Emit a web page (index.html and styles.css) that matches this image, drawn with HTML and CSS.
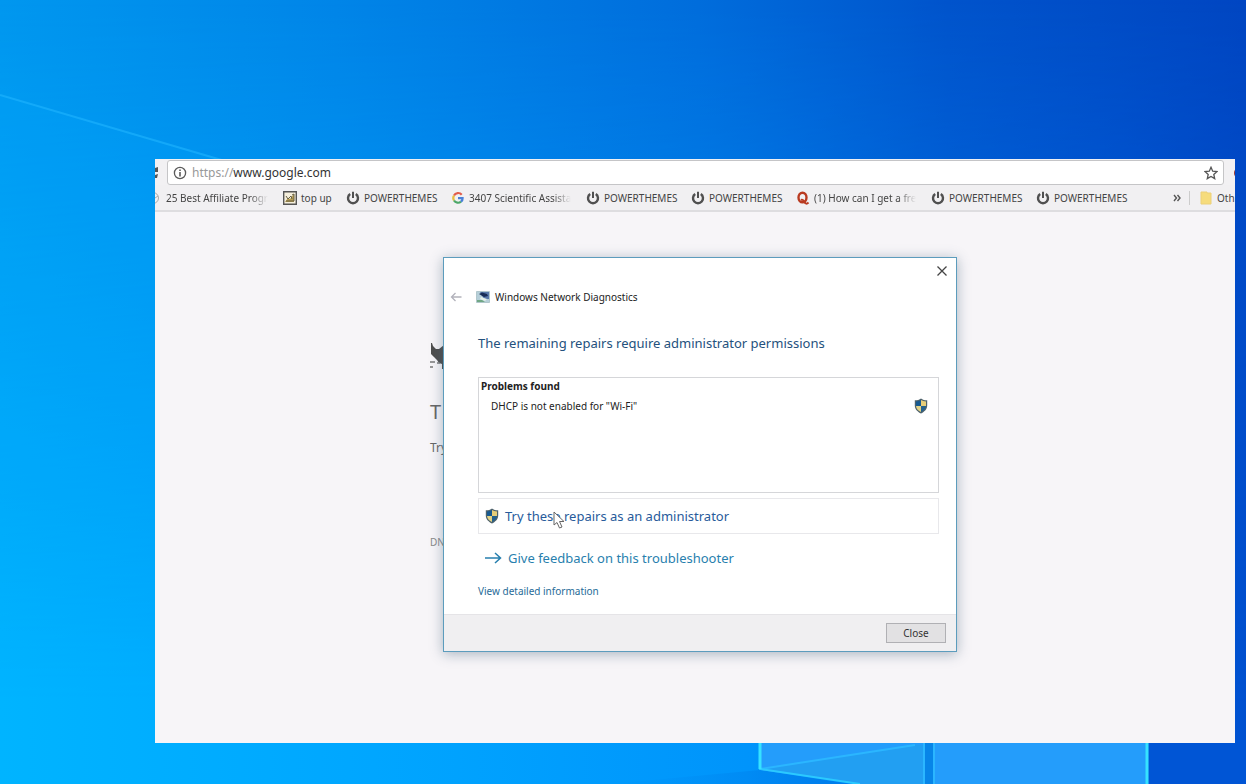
FILE: index.html
```html
<!DOCTYPE html>
<html lang="en">
<head>
<meta charset="utf-8">
<title>Windows Network Diagnostics</title>
<link rel="stylesheet" href="styles.css">
</head>
<body>
<svg class="defs" aria-hidden="true">
  <defs>
    <symbol id="power" viewBox="0 0 14 14"><path d="M4.200 3.100A5 5 0 1 0 9.800 3.100" fill="none" stroke="#505050" stroke-width="2.400"/><path d="M7 .8V7" stroke="#505050" stroke-width="2"/></symbol>
    <symbol id="shield" viewBox="0 0 14 16">
      <path d="M7 .5C5.500 1.800 3.200 2.300.8 2.300V7.500C.8 11.500 4 14 7 15.500 10 14 13.200 11.500 13.200 7.500V2.300C10.800 2.300 8.500 1.800 7 .5Z" fill="#4e626b"/>
      <path d="M7 2V8H2V3.500C4 3.400 5.800 2.800 7 2Z" fill="#175990"/><path d="M7 2V8H12V3.500C10 3.400 8.200 2.800 7 2Z" fill="#e6cd78"/>
      <path d="M2 8H7V14C4.500 12.800 2.200 11 2 8Z" fill="#e2d286"/><path d="M12 8H7V14C9.500 12.800 11.800 11 12 8Z" fill="#23618e"/>
    </symbol>
  </defs>
</svg>
<main class="desktop">
  <svg class="wallpaper" viewBox="0 0 1246 784" preserveAspectRatio="none" aria-hidden="true">
    <defs>
      <linearGradient id="sky" x1="0" y1="0" x2="1" y2="0"><stop offset="0" stop-color="#0097ef"/><stop offset=".27" stop-color="#0085e8"/><stop offset=".56" stop-color="#006ddc"/><stop offset=".76" stop-color="#0054cc"/><stop offset="1" stop-color="#0046c2"/></linearGradient>
      <linearGradient id="floor" x1="0" y1="0" x2="1" y2="0"><stop offset="0" stop-color="#00b4ff"/><stop offset=".3" stop-color="#00a6ff"/><stop offset=".6" stop-color="#0094fb"/><stop offset=".9" stop-color="#0066e4"/><stop offset="1" stop-color="#0050cf"/></linearGradient>
      <linearGradient id="fade" x1="0" y1="0" x2="0" y2="1"><stop offset="0" stop-color="#000"/><stop offset=".9" stop-color="#fff"/></linearGradient>
      <mask id="down"><path d="M0 0H1246V784H0Z" fill="url(#fade)"/></mask>
      <linearGradient id="below" x1="0" y1="0" x2="1" y2="0"><stop offset="0" stop-color="#0090f5" stop-opacity="0"/><stop offset="1" stop-color="#007bea"/></linearGradient>
    </defs>
    <path d="M0 0H1246V784H0Z" fill="url(#sky)"/>
    <path d="M0 0H1246V784H0Z" fill="url(#floor)" mask="url(#down)"/>
    <path d="M0 95L225 161L600 270V500H0Z" fill="#00a8ff" opacity=".15"/>
    <path d="M0 95L225 161" stroke="#20b5ff" stroke-width="2" opacity=".6"/>
    <path d="M610 784L760 770L850 784Z" fill="url(#below)"/>
    <path d="M1149 740H1246V784H1149Z" fill="#0055d5"/>
    <path d="M760 740H1147V784H860L760 770Z" fill="#249dfb"/>
    <path d="M760 769L915 745H924V784H860Z" fill="#229ff2"/>
    <path d="M925 740H933V784H925Z" fill="#0785e8"/>
    <path d="M760 769L915 745M924 743V784M934 743V784" stroke="#2bb6ff" stroke-width="2" fill="none"/>
    <path d="M760 740V769L860 784" stroke="#2bc9ff" stroke-width="2" fill="none"/>
    <path d="M760 740V769M1147 740V784" stroke="#36e2ff" stroke-width="3"/>
  </svg>

  <section class="browser">
    <div class="toolbar">
      <svg class="reload" viewBox="0 0 6 14" aria-hidden="true"><path d="M0 2L3 1V6H0ZM0 9L3 8 2 12H0Z" fill="#555"/></svg>
      <div class="address">
        <svg class="info" viewBox="0 0 14 14" aria-hidden="true"><circle cx="7" cy="7" r="5.600" fill="none" stroke="#5a5a5a" stroke-width="1.300"/><path d="M7 6V10.500M7 3.500V5" stroke="#5a5a5a" stroke-width="1.600"/></svg>
        <div class="url"><span>https://</span>www.google.com</div>
        <button class="star" aria-label="Bookmark this page"><svg viewBox="0 0 14 14"><path d="M7 1.300L8.700 5.200 13 5.600 9.800 8.400 10.700 12.600 7 10.400 3.300 12.600 4.200 8.400 1 5.600 5.300 5.200Z" fill="none" stroke="#555" stroke-width="1.300"/></svg></button>
      </div>
      <svg class="extension" viewBox="0 0 14 14" aria-hidden="true"><circle cx="7" cy="7" r="6" fill="#9b3931"/></svg>
    </div>
    <nav class="bookmarks">
      <a class="mark first long" href="#"><svg viewBox="0 0 14 14"><path d="M5 1.500A5.500 5.500 0 1 1 5 12.500M7 7L10 5" fill="none" stroke="#aaa"/></svg><span>25 Best Affiliate Progr</span></a>
      <a class="mark short" href="#"><svg viewBox="0 0 14 14"><path d="M.7.7H13.300V13.300H.7Z" fill="#f5efdc" stroke="#555" stroke-width="1.400"/><path d="M2 11L5 7 7 8 11 3V11Z" fill="#b79e52"/><path d="M3 5L5 8 8 5 9 8M3 10H11M9 4L11 3V10" stroke="#645d42" fill="none"/></svg><span>top up</span></a>
      <a class="mark" href="#"><svg><use href="#power"/></svg><span>POWERTHEMES</span></a>
      <a class="mark long" href="#"><svg viewBox="0 0 14 14"><g fill="none" stroke-width="2.200"><path d="M10.700 3.700A4.600 4.600 0 0 0 3 4.600" stroke="#e15c4b"/><path d="M3 4.600A4.600 4.600 0 0 0 3 9.500" stroke="#e6bd42"/><path d="M3 9.500A4.600 4.600 0 0 0 10 10.600" stroke="#4ca768"/><path d="M10 10.600Q11.700 9.200 11.600 7.200H7" stroke="#4a80d8"/></g></svg><span>3407 Scientific Assista</span></a>
      <a class="mark" href="#"><svg><use href="#power"/></svg><span>POWERTHEMES</span></a>
      <a class="mark" href="#"><svg><use href="#power"/></svg><span>POWERTHEMES</span></a>
      <a class="mark long" href="#"><svg viewBox="0 0 14 14"><ellipse cx="6.500" cy="6.500" rx="4" ry="4.800" fill="none" stroke="#b93a20" stroke-width="2.400"/><path d="M5 9Q7 8 8.500 11T12.500 11.500" fill="none" stroke="#b93a20" stroke-width="2"/></svg><span>(1) How can I get a fre</span></a>
      <a class="mark" href="#"><svg><use href="#power"/></svg><span>POWERTHEMES</span></a>
      <a class="mark" href="#"><svg><use href="#power"/></svg><span>POWERTHEMES</span></a>
      <button class="more" aria-label="More bookmarks"><svg viewBox="0 0 8 8"><path d="M1 1L3.500 4 1 7M4.500 1L7 4 4.500 7" fill="none" stroke="#555" stroke-width="1.400"/></svg></button>
      <a class="mark other" href="#"><svg viewBox="0 0 14 14"><path d="M1 1H7V2H11V13H1Z" fill="#f6dc7c" stroke="#ecd078"/></svg><span>Oth</span></a>
    </nav>
    <div class="page">
      <svg class="dino" viewBox="0 0 20 30" aria-hidden="true"><path d="M1 2H2L3 5 6 8H9L14 4H20V28H12V23L9 22 7 19 4 16 1 13Z" fill="#4d4d4d"/><path d="M0 21H5M7 22H10M0 26H3" stroke="#777" stroke-width="1.300"/></svg>
      <h1>T</h1>
      <p class="hint">Try</p>
      <p class="code">DN</p>
    </div>

    <section class="dialog" role="dialog" aria-labelledby="dialog-title">
      <button class="dismiss" aria-label="Close window"><svg viewBox="0 0 12 12"><path d="M1.500 1.500L10.500 10.500M10.500 1.500L1.500 10.500" stroke="#444" stroke-width="1.300"/></svg></button>
      <header>
        <button class="back" aria-label="Back"><svg viewBox="0 0 12 12"><path d="M11.500 6H1.500M5.500 2L1.500 6 5.500 10" fill="none" stroke="#b2b2bb" stroke-width="1.300"/></svg></button>
        <svg class="app" viewBox="0 0 14 12" aria-hidden="true"><path d="M.5.5H13.500V11.500H.5Z" fill="#b6cfd9" stroke="#b1c7cc"/><path d="M4 1H13V8H8Z" fill="#5879aa"/><path d="M3 3L6 1.500 11 3 12 5 8 6Z" fill="#182d57"/><path d="M5 6L11 8 9 10 4 8Z" fill="#e6f2e8"/><path d="M1 9H6L9 11H1Z" fill="#70a784"/></svg>
        <span id="dialog-title">Windows Network Diagnostics</span>
      </header>
      <div class="content">
        <h2>The remaining repairs require administrator permissions</h2>
        <div class="problems">
          <h3>Problems found</h3>
          <div class="problem"><span>DHCP is not enabled for "Wi-Fi"</span><svg class="shield"><use href="#shield"/></svg></div>
        </div>
        <button class="command repair"><svg class="shield"><use href="#shield"/></svg><span>Try these repairs as an administrator</span></button>
        <button class="command feedback"><svg class="arrow" viewBox="0 0 17 14"><path d="M0 7H15M10 2L15.500 7 10 12" fill="none" stroke="#277fae" stroke-width="1.500"/></svg><span>Give feedback on this troubleshooter</span></button>
        <a class="details" href="#">View detailed information</a>
      </div>
      <footer><button class="close">Close</button></footer>
      <svg class="cursor" viewBox="0 0 12 18" aria-hidden="true"><path d="M1 1V14L4 11.500 6.500 17 9 16 6.500 10.500H11Z" fill="#fff" stroke="#666"/></svg>
    </section>
  </section>
</main>
</body>
</html>
```
FILE: styles.css
```css
* { box-sizing: border-box; }
body { margin: 0; font-family: "Noto Sans", "Open Sans", sans-serif; font-size: 10px; color: #333; }
button { font: inherit; color: inherit; background: none; border: 0; padding: 0; }
a { color: inherit; text-decoration: none; }
h1, h2, h3, p { margin: 0; font-weight: 400; }
svg { display: block; flex: none; }
.defs { position: absolute; width: 0; height: 0; }
.desktop { position: relative; display: flex; min-height: 100vh; padding: 159px 11px 41px 155px; overflow: hidden; background: #0094f5; }
.wallpaper { position: absolute; inset: 0; width: 100%; height: 100%; }
.browser { position: relative; flex: 1; min-width: 0; display: flex; flex-direction: column; overflow: hidden; background: #f7f5f8; }

.toolbar { display: flex; align-items: center; height: 26px; padding-top: 1px; background: #f2f1f3; }
.reload { width: 6px; height: 14px; margin-right: 6px; }
.address { flex: 1; display: flex; align-items: center; gap: 5px; height: 25px; padding: 0 5px; background: #fff; border: 1px solid #c5c5c7; border-radius: 3px; }
.info, .star svg { width: 14px; height: 14px; }
.url { flex: 1; font-size: 12px; line-height: 16px; color: #333; }
.url span { color: #999; }
.extension { width: 14px; height: 14px; margin: 0 -12px 0 9px; }

.bookmarks { display: flex; align-items: center; height: 27px; background: #f1f0f2; border-bottom: 2px solid #dedde0; color: #444; overflow: hidden; }
.mark { flex: none; display: flex; align-items: center; gap: 4px; width: 105px; line-height: 16px; white-space: nowrap; }
.mark svg { width: 14px; height: 14px; }
.long { width: 135px; }
.long span { -webkit-mask-image: linear-gradient(to right, #000 82%, transparent); mask-image: linear-gradient(to right, #000 82%, transparent); }
.first { margin-left: -7px; }
.short { width: 63px; }
.more { margin-left: auto; padding: 0 8px 0 4px; border-right: 1px solid #ccc; line-height: 14px; height: 14px; }
.more svg { width: 8px; height: 8px; }
.other { width: 35px; margin-left: 10px; gap: 3px; }

.page { width: 270px; margin-left: 275px; padding-top: 129px; color: #666; }
.dino { width: 20px; height: 30px; }
.page h1 { margin-top: 28px; font-size: 20px; line-height: 26px; }
.hint { margin-top: 14px; font-size: 12px; line-height: 18px; }
.code { margin-top: 77px; font-size: 10px; line-height: 16px; color: #888; }

.dialog { position: absolute; top: 98px; left: 288px; width: 514px; display: flex; flex-direction: column; background: #fff; border: 1px solid #5c9cbd; box-shadow: 0 2px 12px rgba(70, 100, 125, .45); }
.dismiss { align-self: flex-end; padding: 7px 8px 0; }
.dismiss svg, .back svg { width: 12px; height: 12px; }
.dialog header { display: flex; align-items: center; height: 20px; margin-top: 10px; padding-left: 6px; color: #222; }
.app { width: 14px; height: 12px; margin: 0 5px 0 14px; }
.content { display: flex; flex-direction: column; padding: 26px 17px 15px 34px; }
.content h2 { color: #24517d; font-size: 13px; line-height: 20px; }
.problems { height: 116px; margin-top: 24px; padding: 0 2px; border: 1px solid #d5d6d9; color: #222; }
.problems h3 { font-size: 10px; line-height: 16px; font-weight: 700; }
.problem { display: flex; align-items: center; justify-content: space-between; margin-top: 3px; padding: 0 8px 0 10px; line-height: 18px; }
.shield { width: 14px; height: 16px; }
.command { display: flex; align-items: center; height: 36px; padding: 0 6px; border: 1px solid #e8e8eb; font-size: 13px; text-align: left; gap: 6px; }
.repair { margin-top: 5px; color: #285b9b; }
.feedback { margin-top: 6px; border-color: transparent; color: #287fae; }
.arrow { width: 17px; height: 14px; }
.details { align-self: flex-start; margin-top: 7px; color: #276b98; line-height: 16px; }
.dialog footer { display: flex; justify-content: flex-end; padding: 8px 10px; background: #f0eff1; border-top: 1px solid #e5e4e7; }
.close { width: 60px; height: 20px; background: #e2e1e3; border: 1px solid #b0b0b4; }
.cursor { position: absolute; top: 253px; left: 109px; width: 12px; height: 18px; }
```
